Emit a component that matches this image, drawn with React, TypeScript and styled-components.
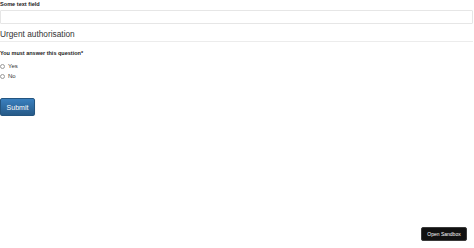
import React from "react";
import styled, { createGlobalStyle } from "styled-components";

const Global = createGlobalStyle`
  html, body { margin: 0; padding: 0; background: #fff; }
  body { font-family: "Liberation Sans", Arial, sans-serif; color: #333; }
`;

const Page = styled.div`
  display: flex;
  flex-direction: column;
  width: 473px;
`;

const Label = styled.label`
  display: block;
  font-size: 5.6px;
  font-weight: bold;
  line-height: 8px;
  color: #222;
`;

const Input = styled.input`
  box-sizing: border-box;
  display: block;
  width: 473px;
  height: 14px;
  margin: 2px 0 0;
  border: 1px solid #e6e6e6;
  border-radius: 1px;
  padding: 0 3px;
  font-size: 6px;
`;

const Section = styled.div`
  display: flex;
  flex-direction: column;
`;

const Heading = styled.div`
  box-sizing: border-box;
  width: 473px;
  margin-top: 4px;
  font-size: 8.3px;
  line-height: 12px;
  color: #333;
  border-bottom: 1px solid #ececec;
  padding-bottom: 1px;
`;

const Question = styled.div`
  margin-top: 8px;
  font-size: 5.5px;
  font-weight: bold;
  line-height: 7px;
  color: #222;
`;

const Options = styled.div`
  display: flex;
  flex-direction: column;
  gap: 3px;
  margin-top: 6px;
`;

const Option = styled.label`
  display: flex;
  align-items: center;
  gap: 3px;
  font-size: 6px;
  line-height: 7px;
  color: #333;
`;

const Radio = styled.span`
  box-sizing: border-box;
  width: 5px;
  height: 5px;
  border-radius: 50%;
  border: 1px solid #9a9a9a;
  background: #fff;
`;

const SubmitButton = styled.button`
  align-self: flex-start;
  margin-top: 18px;
  width: 35px;
  height: 18px;
  padding: 0;
  border: 1px solid #245580;
  border-radius: 2px;
  background: linear-gradient(#3a80bf, #265a88);
  color: #fff;
  font-family: "Liberation Sans", Arial, sans-serif;
  font-size: 7px;
  box-shadow: 0 1px 1px rgba(0, 0, 0, 0.2);
`;

const Sandbox = styled.button`
  position: fixed;
  right: 7px;
  bottom: 7px;
  width: 46px;
  height: 14px;
  padding: 0;
  border: 1px solid #3a3a3a;
  border-radius: 2px;
  background: #111;
  color: #fff;
  font-family: "Liberation Sans", Arial, sans-serif;
  font-size: 5px;
`;

export default function App() {
  return (
    <>
      <Global />
      <Page>
        <Label>Some text field</Label>
        <Input type="text" />
        <Section>
          <Heading>Urgent authorisation</Heading>
          <Question>You must answer this question*</Question>
          <Options>
            <Option>
              <Radio />
              Yes
            </Option>
            <Option>
              <Radio />
              No
            </Option>
          </Options>
        </Section>
        <SubmitButton>Submit</SubmitButton>
      </Page>
      <Sandbox>Open Sandbox</Sandbox>
    </>
  );
}
